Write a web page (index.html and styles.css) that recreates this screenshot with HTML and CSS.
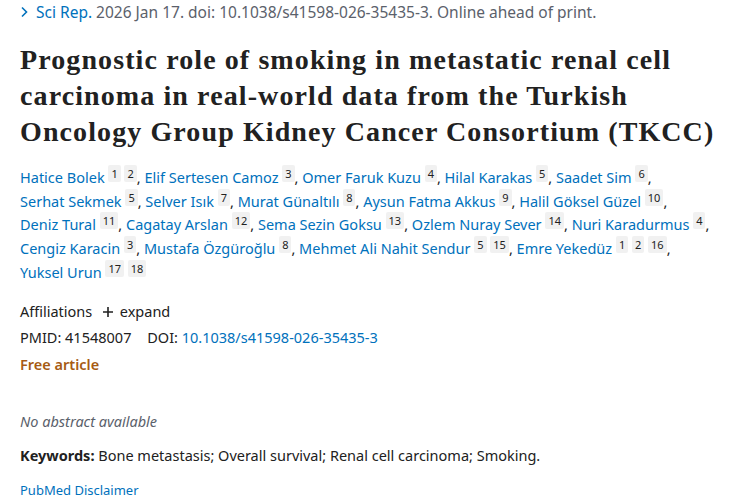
FILE: index.html
```html
<!DOCTYPE html>
<html lang="en">
<head>
  <meta charset="UTF-8">
  <title>Prognostic role of smoking in metastatic renal cell carcinoma</title>
  <link rel="stylesheet" href="styles.css">
</head>
<body>
  <div class="article">

    <div class="cit">
      <span class="chev">
        <svg width="9" height="12" viewBox="0 0 9 12"><path d="M2 1.5 L6.5 6 L2 10.5" fill="none" stroke="#0071bc" stroke-width="1.6"/></svg>
      </span>
      <a href="#" class="journal">Sci Rep.</a> 2026 Jan 17. doi: 10.1038/s41598-026-35435-3. Online ahead of print.
    </div>

    <h1 class="title">Prognostic role of smoking in metastatic renal cell carcinoma in real-world data from the Turkish Oncology Group Kidney Cancer Consortium (TKCC)</h1>

    <div class="authors">
      <span class="author"><a href="#">Hatice Bolek</a> <sup>1</sup> <sup>2</sup>,</span>
      <span class="author"><a href="#">Elif Sertesen Camoz</a> <sup>3</sup>,</span>
      <span class="author"><a href="#">Omer Faruk Kuzu</a> <sup>4</sup>,</span>
      <span class="author"><a href="#">Hilal Karakas</a> <sup>5</sup>,</span>
      <span class="author"><a href="#">Saadet Sim</a> <sup>6</sup>,</span>
      <span class="author"><a href="#">Serhat Sekmek</a> <sup>5</sup>,</span>
      <span class="author"><a href="#">Selver Isık</a> <sup>7</sup>,</span>
      <span class="author"><a href="#">Murat Günaltılı</a> <sup>8</sup>,</span>
      <span class="author"><a href="#">Aysun Fatma Akkus</a> <sup>9</sup>,</span>
      <span class="author"><a href="#">Halil Göksel Güzel</a> <sup>10</sup>,</span>
      <span class="author"><a href="#">Deniz Tural</a> <sup>11</sup>,</span>
      <span class="author"><a href="#">Cagatay Arslan</a> <sup>12</sup>,</span>
      <span class="author"><a href="#">Sema Sezin Goksu</a> <sup>13</sup>,</span>
      <span class="author"><a href="#">Ozlem Nuray Sever</a> <sup>14</sup>,</span>
      <span class="author"><a href="#">Nuri Karadurmus</a> <sup>4</sup>,</span>
      <span class="author"><a href="#">Cengiz Karacin</a> <sup>3</sup>,</span>
      <span class="author"><a href="#">Mustafa Özgüroğlu</a> <sup>8</sup>,</span>
      <span class="author"><a href="#">Mehmet Ali Nahit Sendur</a> <sup>5</sup> <sup>15</sup>,</span>
      <span class="author"><a href="#">Emre Yekedüz</a> <sup>1</sup> <sup>2</sup> <sup>16</sup>,</span>
      <span class="author"><a href="#">Yuksel Urun</a> <sup>17</sup> <sup>18</sup></span>
    </div>

    <div class="affil">
      Affiliations
      <span class="expand">
        <svg width="12" height="12" viewBox="0 0 12 12"><path d="M6 1 V11 M1 6 H11" stroke="#212121" stroke-width="1.6"/></svg>
        expand
      </span>
    </div>

    <div class="ids">
      <span class="pmid">PMID: 41548007</span>
      <span>DOI: <a href="#">10.1038/s41598-026-35435-3</a></span>
    </div>

    <div class="free">Free article</div>

    <div class="noabs">No abstract available</div>

    <div class="keywords"><strong>Keywords:</strong> Bone metastasis; Overall survival; Renal cell carcinoma; Smoking.</div>

    <a href="#" class="disclaimer">PubMed Disclaimer</a>

  </div>
</body>
</html>
```

FILE: styles.css
```css
body {
  margin: 0;
  font-family: "Noto Sans", "Open Sans", sans-serif;
  color: #212121;
  background: #fff;
}

a {
  color: #0071bc;
  text-decoration: none;
}

.article {
  padding: 2px 20px 0 20px;
  width: 705px;
}

.cit {
  font-size: 15.5px;
  color: #5b616b;
  line-height: 20px;
}

.chev {
  display: inline-block;
  width: 12px;
}

.title {
  font-family: "Liberation Serif", serif;
  font-weight: bold;
  font-size: 28px;
  letter-spacing: 1.1px;
  line-height: 36px;
  margin: 20px 0 16px 0;
  color: #212121;
}

.authors {
  font-size: 14.5px;
  line-height: 23.7px;
}

.author {
  white-space: nowrap;
}

.authors sup {
  font-size: 11px;
  line-height: 1;
  background: #f1f1f1;
  color: #212121;
  padding: 1px 3px;
  border-radius: 2px;
  vertical-align: 5px;
}

.affil {
  font-size: 14.5px;
  margin-top: 13px;
  line-height: 26px;
}

.expand {
  margin-left: 6px;
}

.expand svg {
  vertical-align: -1px;
  margin-right: 2px;
}

.ids {
  font-size: 14.5px;
  line-height: 26px;
}

.pmid {
  margin-right: 12px;
}

.free {
  color: #a65b13;
  font-weight: 600;
  font-size: 14.5px;
  line-height: 28px;
}

.noabs {
  font-style: italic;
  color: #5b616b;
  font-size: 14.5px;
  margin-top: 32px;
  line-height: 22px;
}

.keywords {
  font-size: 14.5px;
  margin-top: 12px;
  line-height: 22px;
}

.disclaimer {
  display: block;
  font-size: 13px;
  margin-top: 14px;
  line-height: 20px;
}
```
